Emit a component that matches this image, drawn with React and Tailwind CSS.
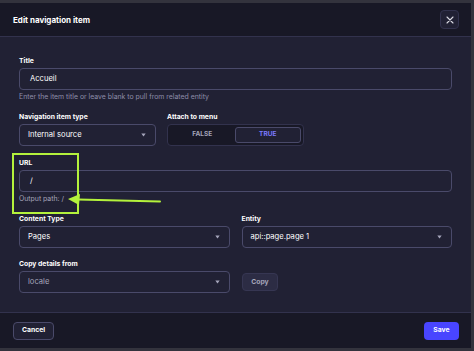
import React from "react";

const font = { fontFamily: "Inter, 'Noto Sans', sans-serif" };

function Caret() {
  return (
    <svg width="5" height="4" viewBox="0 0 5 4" className="shrink-0">
      <path d="M0.3 0.6 L4.7 0.6 L2.5 3.4 Z" fill="#a5a5ba" />
    </svg>
  );
}

function Label({ children }) {
  return <div className="h-[7px] text-[6.8px] font-bold text-[#ffffff] leading-[7px] mb-[4px] whitespace-nowrap">{children}</div>;
}

function Select({ value, muted, className }) {
  return (
    <div className={"h-[22px] border border-[#4a4a6a] rounded-[4px] flex items-center justify-between pl-[8px] pr-[9px] " + (className || "")}>
      <span className={"text-[7.6px] leading-none " + (muted ? "text-[#a5a5ba]" : "text-[#ffffff]")}>{value}</span>
      <Caret />
    </div>
  );
}

export default function App() {
  return (
    <div className="w-[474px] h-[351px] bg-[#33333d] overflow-hidden pt-[3px] relative" style={font}>
      <div className="w-[471px] h-[345px] flex flex-col bg-[#212134]">
        {/* header */}
        <div className="h-[34px] bg-[#181826] border-b border-[#32324d] flex items-center justify-between pl-[13px] pr-[12px] shrink-0">
          <span className="text-[8px] font-bold text-[#ffffff]">Edit navigation item</span>
          <div className="w-[19px] h-[19px] rounded-[4px] border border-[#32324d] bg-[#212134] flex items-center justify-center">
            <svg width="8" height="8" viewBox="0 0 8 8">
              <path d="M1 1 L7 7 M7 1 L1 7" stroke="#dcdce4" strokeWidth="1.1" strokeLinecap="round" />
            </svg>
          </div>
        </div>

        {/* body */}
        <div className="flex-1 pl-[19px] pr-[19px] pt-[20px]">
          <Label>Title</Label>
          <div className="h-[22px] border border-[#4a4a6a] rounded-[4px] flex items-center pl-[10px]">
            <span className="text-[7.6px] text-[#ffffff] leading-none">Accueil</span>
          </div>
          <div className="h-[7px] text-[6.9px] text-[#8e8ea9] mt-[3px] leading-[7px] whitespace-nowrap">Enter the item title or leave blank to pull from related entity</div>

          <div className="flex gap-[11px] mt-[13px]">
            <div className="w-[137px]">
              <Label>Navigation item type</Label>
              <Select value="Internal source" />
            </div>
            <div className="w-[137px]">
              <Label>Attach to menu</Label>
              <div className="h-[22px] border border-[#32324d] rounded-[4px] bg-[#181826] flex items-center p-[2px]">
                <div className="flex-1 text-center text-[6.5px] font-bold text-[#a5a5ba]">FALSE</div>
                <div className="flex-1 h-full border border-[#4a4a6a] rounded-[3px] bg-[#212134] flex items-center justify-center text-[6.5px] font-bold text-[#7b79ff]">TRUE</div>
              </div>
            </div>
          </div>

          <div className="mt-[13px]">
            <Label>URL</Label>
            <div className="h-[22px] border border-[#4a4a6a] rounded-[4px] flex items-center pl-[10px]">
              <span className="text-[7.6px] text-[#ffffff] leading-none">/</span>
            </div>
            <div className="h-[7px] text-[6.9px] text-[#a5a5ba] mt-[3px] leading-[7px]">Output path: /</div>
          </div>

          <div className="flex gap-[12px] mt-[13px]">
            <div className="flex-1">
              <Label>Content Type</Label>
              <Select value="Pages" />
            </div>
            <div className="flex-1">
              <Label>Entity</Label>
              <Select value="api::page.page 1" />
            </div>
          </div>

          <div className="mt-[12px]">
            <Label>Copy details from</Label>
            <div className="flex gap-[12px] items-center">
              <Select value="locale" muted className="w-[211px]" />
              <div className="w-[36px] h-[18px] rounded-[4px] bg-[#2c2c44] border border-[#363652] flex items-center justify-center text-[6.8px] font-bold text-[#a5a5ba]">Copy</div>
            </div>
          </div>
        </div>

        {/* footer */}
        <div className="h-[36px] bg-[#181826] border-t border-[#32324d] flex items-center justify-between pl-[13px] pr-[12px] shrink-0">
          <div className="h-[18px] w-[41px] rounded-[4px] border border-[#4a4a6a] bg-[#212134] flex items-center justify-center text-[6.8px] font-bold text-[#ffffff]">Cancel</div>
          <div className="h-[18px] w-[35px] rounded-[4px] bg-[#4945ff] flex items-center justify-center text-[6.8px] font-bold text-[#ffffff]">Save</div>
        </div>
      </div>

      {/* annotation overlay */}
      <svg className="absolute left-0 top-0 pointer-events-none" width="474" height="351">
        <rect x="13" y="154" width="65" height="59" fill="none" stroke="#b4f23c" strokeWidth="2" />
        <path d="M160 201.5 L78 199.5" stroke="#b4f23c" strokeWidth="2" strokeLinecap="round" />
        <path d="M68 199 L80 194 L79 205 Z" fill="#b4f23c" />
      </svg>
    </div>
  );
}
